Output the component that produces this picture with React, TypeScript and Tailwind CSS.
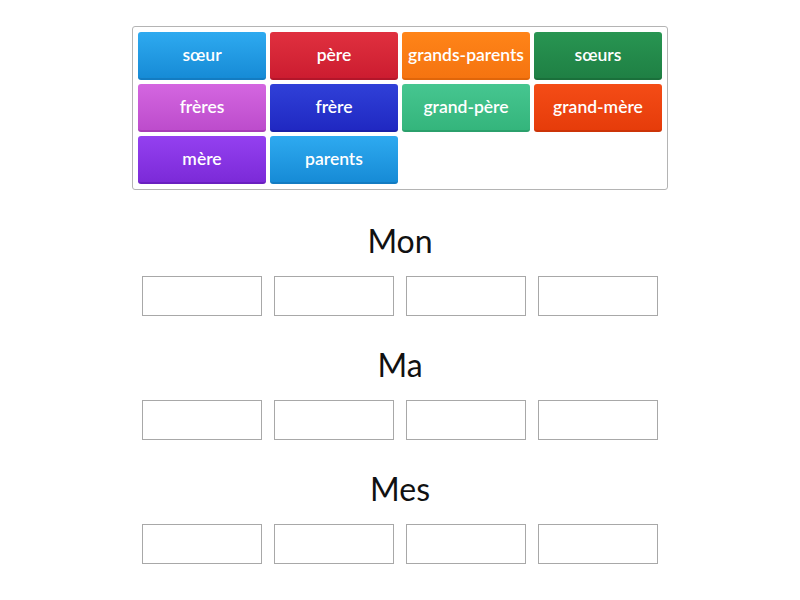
const tiles = [
  { label: "sœur", cls: "from-[#2eaaf0] to-[#168bd6] border-b-[#137cc2]" },
  { label: "père", cls: "from-[#e0303f] to-[#cc1c30] border-b-[#b3162a]" },
  { label: "grands-parents", cls: "from-[#ff8418] to-[#f57410] border-b-[#e0660a]" },
  { label: "sœurs", cls: "from-[#289552] to-[#1f8044] border-b-[#1a703b]" },
  { label: "frères", cls: "from-[#d466e0] to-[#bd4ccc] border-b-[#a83db6]" },
  { label: "frère", cls: "from-[#3040d8] to-[#2028c2] border-b-[#1a20a8]" },
  { label: "grand-père", cls: "from-[#46c690] to-[#34b57c] border-b-[#2ba06c]" },
  { label: "grand-mère", cls: "from-[#f44c16] to-[#e63c0a] border-b-[#cc3408]" },
  { label: "mère", cls: "from-[#9440f0] to-[#7c2ad8] border-b-[#6a20c0]" },
  { label: "parents", cls: "from-[#2eaaf0] to-[#168bd6] border-b-[#137cc2]" },
];

const groups = ["Mon", "Ma", "Mes"];

export default function App() {
  return (
    <div className="flex min-h-[600px] w-[800px] flex-col items-center bg-white pt-[26px] font-['Lato',sans-serif]">
      <div className="grid w-[536px] grid-cols-4 gap-1 rounded-[3px] border border-[#b4b4b4] p-[5px]">
        {tiles.map((t) => (
          <div
            key={t.label}
            className={`flex h-12 items-center justify-center rounded-[3px] border-b-2 bg-gradient-to-b text-[17.5px] font-semibold text-white ${t.cls}`}
          >
            {t.label}
          </div>
        ))}
      </div>
      <div className="mt-[31px] flex flex-col gap-[29px]">
        {groups.map((g) => (
          <div key={g} className="flex flex-col items-center">
            <h2 className="h-[40px] text-[32px] leading-[40px] text-[#111]">{g}</h2>
            <div className="mt-[15px] flex gap-3">
              {[0, 1, 2, 3].map((i) => (
                <div key={i} className="h-10 w-[120px] border border-[#a8a8a8] bg-white" />
              ))}
            </div>
          </div>
        ))}
      </div>
    </div>
  );
}
